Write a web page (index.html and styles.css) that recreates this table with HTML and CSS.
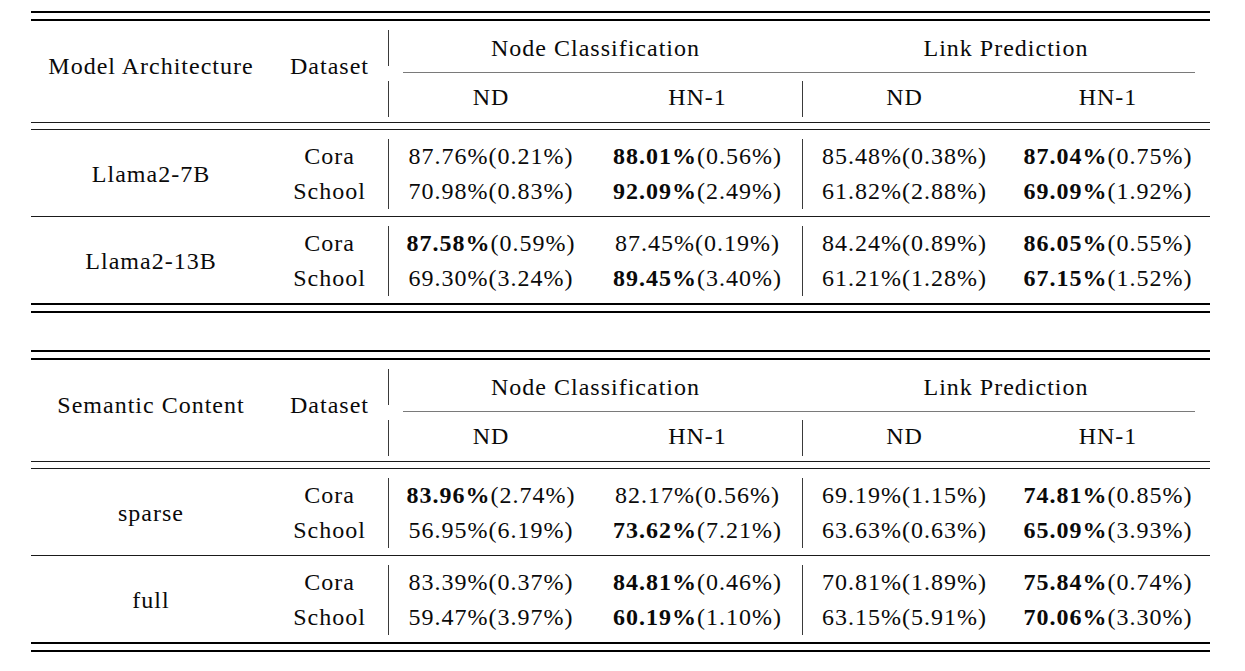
FILE: index.html
```html
<!DOCTYPE html>
<html lang="en">
<head>
<meta charset="utf-8">
<title>Results tables</title>
<link rel="stylesheet" href="styles.css">
</head>
<body>
<main class="page">
  <section class="tbl">
    <div class="rule heavy"></div>
    <div class="rule heavy gap"></div>
    <div class="head">
      <div class="h-label c1">Model Architecture</div>
      <div class="h-label c2">Dataset</div>
      <div class="h-group g1 vl">Node Classification</div>
      <div class="h-group g2">Link Prediction</div>
      <div class="cmid"></div>
      <div class="h-sub s3 vl">ND</div>
      <div class="h-sub s4">HN-1</div>
      <div class="h-sub s5 vl">ND</div>
      <div class="h-sub s6">HN-1</div>
    </div>
    <div class="rule"></div>
    <div class="rule gap"></div>
    <div class="group">
      <div class="lbl">Llama2-7B</div>
      <div class="cell ds r1">Cora</div>
      <div class="cell c3 vl r1">87.76%(0.21%)</div>
      <div class="cell c4 r1"><b>88.01%</b>(0.56%)</div>
      <div class="cell c5 vl r1">85.48%(0.38%)</div>
      <div class="cell c6 r1"><b>87.04%</b>(0.75%)</div>
      <div class="cell ds r2">School</div>
      <div class="cell c3 vl r2">70.98%(0.83%)</div>
      <div class="cell c4 r2"><b>92.09%</b>(2.49%)</div>
      <div class="cell c5 vl r2">61.82%(2.88%)</div>
      <div class="cell c6 r2"><b>69.09%</b>(1.92%)</div>
    </div>
    <div class="rule"></div>
    <div class="group">
      <div class="lbl">Llama2-13B</div>
      <div class="cell ds r1">Cora</div>
      <div class="cell c3 vl r1"><b>87.58%</b>(0.59%)</div>
      <div class="cell c4 r1">87.45%(0.19%)</div>
      <div class="cell c5 vl r1">84.24%(0.89%)</div>
      <div class="cell c6 r1"><b>86.05%</b>(0.55%)</div>
      <div class="cell ds r2">School</div>
      <div class="cell c3 vl r2">69.30%(3.24%)</div>
      <div class="cell c4 r2"><b>89.45%</b>(3.40%)</div>
      <div class="cell c5 vl r2">61.21%(1.28%)</div>
      <div class="cell c6 r2"><b>67.15%</b>(1.52%)</div>
    </div>
    <div class="rule heavy"></div>
    <div class="rule heavy gap"></div>
  </section>

  <section class="tbl second">
    <div class="rule heavy"></div>
    <div class="rule heavy gap"></div>
    <div class="head">
      <div class="h-label c1">Semantic Content</div>
      <div class="h-label c2">Dataset</div>
      <div class="h-group g1 vl">Node Classification</div>
      <div class="h-group g2">Link Prediction</div>
      <div class="cmid"></div>
      <div class="h-sub s3 vl">ND</div>
      <div class="h-sub s4">HN-1</div>
      <div class="h-sub s5 vl">ND</div>
      <div class="h-sub s6">HN-1</div>
    </div>
    <div class="rule"></div>
    <div class="rule gap"></div>
    <div class="group">
      <div class="lbl">sparse</div>
      <div class="cell ds r1">Cora</div>
      <div class="cell c3 vl r1"><b>83.96%</b>(2.74%)</div>
      <div class="cell c4 r1">82.17%(0.56%)</div>
      <div class="cell c5 vl r1">69.19%(1.15%)</div>
      <div class="cell c6 r1"><b>74.81%</b>(0.85%)</div>
      <div class="cell ds r2">School</div>
      <div class="cell c3 vl r2">56.95%(6.19%)</div>
      <div class="cell c4 r2"><b>73.62%</b>(7.21%)</div>
      <div class="cell c5 vl r2">63.63%(0.63%)</div>
      <div class="cell c6 r2"><b>65.09%</b>(3.93%)</div>
    </div>
    <div class="rule"></div>
    <div class="group">
      <div class="lbl">full</div>
      <div class="cell ds r1">Cora</div>
      <div class="cell c3 vl r1">83.39%(0.37%)</div>
      <div class="cell c4 r1"><b>84.81%</b>(0.46%)</div>
      <div class="cell c5 vl r1">70.81%(1.89%)</div>
      <div class="cell c6 r1"><b>75.84%</b>(0.74%)</div>
      <div class="cell ds r2">School</div>
      <div class="cell c3 vl r2">59.47%(3.97%)</div>
      <div class="cell c4 r2"><b>60.19%</b>(1.10%)</div>
      <div class="cell c5 vl r2">63.15%(5.91%)</div>
      <div class="cell c6 r2"><b>70.06%</b>(3.30%)</div>
    </div>
    <div class="rule heavy"></div>
    <div class="rule heavy gap"></div>
  </section>
</main>
</body>
</html>
```

FILE: styles.css
```css
html, body {
  margin: 0;
  padding: 0;
  background: #ffffff;
}

body {
  font-family: "Liberation Serif", "Times New Roman", serif;
  font-size: 24px;
  letter-spacing: 1px;
  color: #0a0a0a;
}

.page {
  padding: 11px 0 0 31px;
}

.tbl {
  width: 1179px;
  display: flex;
  flex-direction: column;
}

.tbl.second {
  margin-top: 37px;
}

.rule {
  height: 0;
  border-top: 1px solid #1a1a1a;
}

.rule.heavy {
  border-top-width: 2px;
  border-top-color: #000;
}

.rule.gap {
  margin-top: 6px;
}

.head,
.group {
  display: grid;
  grid-template-columns: 240px 117px 205px 209px 204px 204px;
}

.head {
  grid-template-rows: 36px 15px 36px;
  padding: 9px 0 5px;
}

.vl {
  border-left: 1px solid #3a3a3a;
}

.h-label {
  grid-row: 1 / 4;
  align-self: start;
  margin-top: 18px;
  line-height: 36px;
  text-align: center;
  white-space: nowrap;
}

.c1 { grid-column: 1; }
.c2 { grid-column: 2; }

.h-group {
  grid-row: 1;
  line-height: 36px;
  text-align: center;
  white-space: nowrap;
}

.g1 { grid-column: 3 / 5; }
.g2 { grid-column: 5 / 7; }

.cmid {
  grid-column: 3 / 7;
  grid-row: 2;
  margin: 6px 15px 0;
  height: 0;
  border-top: 1px solid #7a7a7a;
}

.h-sub {
  grid-row: 3;
  line-height: 32px;
  text-align: center;
  white-space: nowrap;
}

.s3 { grid-column: 3; }
.s4 { grid-column: 4; }
.s5 { grid-column: 5; }
.s6 { grid-column: 6; }

.group {
  grid-template-rows: 35px 35px;
  padding: 9px 0 7px;
}

.lbl {
  grid-column: 1;
  grid-row: 1 / 3;
  align-self: center;
  text-align: center;
  line-height: 35px;
  white-space: nowrap;
}

.cell {
  line-height: 35px;
  text-align: center;
  white-space: nowrap;
}

.cell b {
  font-weight: 700;
}

.r1 { grid-row: 1; }
.r2 { grid-row: 2; }

.ds { grid-column: 2; }
.c3 { grid-column: 3; }
.c4 { grid-column: 4; }
.c5 { grid-column: 5; }
.c6 { grid-column: 6; }
```
